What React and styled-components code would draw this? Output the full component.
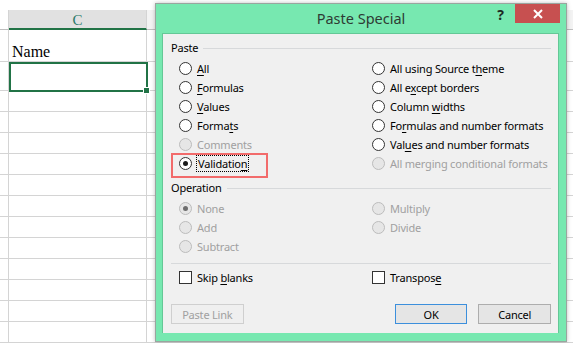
import styled, { createGlobalStyle } from "styled-components";

const Global = createGlobalStyle`
  html, body {
    margin: 0;
    padding: 0;
    background: #ffffff;
  }
`;

const Screen = styled.div`
  position: relative;
  width: 573px;
  height: 343px;
  overflow: hidden;
  background: #ffffff;
  box-shadow: 0 1px 3px rgba(0, 0, 0, 0.45);
`;

/* ---------- spreadsheet behind the dialog ---------- */

const Sheet = styled.div`
  position: relative;
  padding-top: 10px;
  display: grid;
  grid-template-columns: 9px 138px repeat(6, 72px);
  grid-template-rows: 20px 32px 29px repeat(12, 21px);
`;

const HeadCell = styled.div`
  box-sizing: border-box;
  border-right: 1px solid #d4d4d4;
  border-bottom: ${(p) => (p.$active ? "2px solid #217346" : "1px solid #bfbfbf")};
  background: ${(p) => (p.$active ? "#e1e1e1" : p.$corner ? "#ffffff" : "#f3f3f3")};
  color: #2b7a6a;
  font-family: "Liberation Serif", serif;
  font-size: 15px;
  line-height: 20px;
  text-align: center;
`;

const Cell = styled.div`
  box-sizing: border-box;
  border-right: 1px solid #d4d4d4;
  border-bottom: 1px solid #d4d4d4;
  font-family: "Liberation Serif", serif;
  font-size: 16px;
  color: #000;
  padding: 14px 0 0 3px;
  line-height: 16px;
`;

const Selection = styled.div`
  position: absolute;
  left: 9px;
  top: 62px;
  width: 139px;
  height: 30px;
  box-sizing: border-box;
  border: 2px solid #217346;

  &::after {
    content: "";
    position: absolute;
    right: -4px;
    bottom: -4px;
    width: 5px;
    height: 5px;
    background: #217346;
    border: 1px solid #fff;
  }
`;

/* ---------- dialog window ---------- */

const Dialog = styled.div`
  position: absolute;
  left: 155px;
  top: 3px;
  width: 412px;
  height: 339px;
  box-sizing: border-box;
  border: 1px solid #9aa59f;
  background: #77e8b0;
  display: flex;
  flex-direction: column;
  box-shadow: 0 0 4px rgba(0, 0, 0, 0.25);
  font-family: "Noto Sans", "Open Sans", sans-serif;
`;

const TitleBar = styled.div`
  height: 29px;
  display: grid;
  grid-template-columns: 1fr auto 1fr;
  align-items: start;
`;

const Title = styled.div`
  grid-column: 2;
  font-size: 14.5px;
  line-height: 28px;
  color: #2e3b34;
`;

const Controls = styled.div`
  grid-column: 3;
  justify-self: end;
  display: flex;
  align-items: flex-start;
  gap: 11px;
  margin-right: 6px;
`;

const Help = styled.div`
  font-size: 14px;
  font-weight: 700;
  color: #1d2a23;
  line-height: 21px;
`;

const CloseButton = styled.div`
  width: 45px;
  height: 19px;
  background: #c75050;
  display: flex;
  align-items: center;
  justify-content: center;
`;

const Panel = styled.div`
  flex: 1;
  margin: 0 7px 8px 6px;
  background: #f0f0f0;
  border: 1px solid #64c896;
  border-bottom: none;
  padding: 0 7px 0 8px;
  display: flex;
  flex-direction: column;
  font-size: 11px;
  letter-spacing: -0.2px;
  color: #000;
`;

const Legend = styled.div`
  display: flex;
  align-items: center;
  height: 16px;
  margin-top: ${(p) => p.$top}px;

  span {
    line-height: 16px;
  }

  &::after {
    content: "";
    flex: 1;
    height: 1px;
    background: #d7d9db;
    margin-left: 5px;
  }
`;

const Options = styled.div`
  display: grid;
  grid-template-columns: 193px 1fr;
  grid-auto-rows: 19px;
  grid-auto-flow: ${(p) => (p.$column ? "column" : "row")};
  grid-template-rows: ${(p) => (p.$column ? `repeat(${p.$column}, 19px)` : "none")};
  padding-left: 8px;
  margin-top: ${(p) => p.$top}px;
`;

const Option = styled.div`
  position: relative;
  display: flex;
  align-items: center;
  gap: 5px;
  color: ${(p) => (p.$disabled ? "#a0a0a0" : "#000")};
  white-space: nowrap;
`;

const Radio = styled.span`
  width: 13px;
  height: 13px;
  box-sizing: border-box;
  border-radius: 50%;
  border: 1px solid ${(p) => (p.$disabled ? "#bcbcbc" : "#333")};
  background: ${(p) => (p.$disabled ? "#e6e6e6" : "#fff")};
  display: flex;
  align-items: center;
  justify-content: center;
  flex-shrink: 0;

  &::after {
    content: "";
    display: ${(p) => (p.$checked ? "block" : "none")};
    width: 5px;
    height: 5px;
    border-radius: 50%;
    background: ${(p) => (p.$disabled ? "#6d6d6d" : "#1a1a1a")};
  }
`;

const Check = styled.span`
  width: 13px;
  height: 13px;
  box-sizing: border-box;
  border: 1px solid #333;
  background: #fff;
  flex-shrink: 0;
`;

const Focus = styled.span`
  outline: 1px dotted #000;
  outline-offset: 0;
  padding: 0 1px;
  line-height: 15px;
`;

const Highlight = styled.div`
  position: absolute;
  left: -8px;
  top: -1px;
  width: 97px;
  height: 25px;
  box-sizing: border-box;
  border: 2px solid #f26b6b;
  pointer-events: none;
`;

const Separator = styled.div`
  height: 1px;
  background: #d7d9db;
  margin-top: 7px;
`;

const Buttons = styled.div`
  display: flex;
  margin-top: 17px;
  gap: 11px;
`;

const Button = styled.div`
  width: 74px;
  height: 20px;
  box-sizing: border-box;
  display: flex;
  align-items: center;
  justify-content: center;
  border: 1px solid
    ${(p) => (p.$default ? "#3c8fdc" : p.$disabled ? "#cfcfcf" : "#adadad")};
  background: ${(p) => (p.$disabled ? "#efefef" : "#e5e5e5")};
  color: ${(p) => (p.$disabled ? "#a0a0a0" : "#000")};
  margin-left: ${(p) => p.$left || 0}px;
`;

const Key = styled.u`
  text-underline-offset: 2px;
`;

const pasteLeft = [
  { pre: "", key: "A", post: "ll" },
  { pre: "", key: "F", post: "ormulas" },
  { pre: "", key: "V", post: "alues" },
  { pre: "Forma", key: "t", post: "s" },
  { pre: "Comments", disabled: true },
  { pre: "Validatio", key: "n", post: "", checked: true, focus: true },
];

const pasteRight = [
  { pre: "All using Source t", key: "h", post: "eme" },
  { pre: "All e", key: "x", post: "cept borders" },
  { pre: "Column ", key: "w", post: "idths" },
  { pre: "Fo", key: "r", post: "mulas and number formats" },
  { pre: "Val", key: "u", post: "es and number formats" },
  { pre: "All merging conditional formats", disabled: true },
];

const operations = [
  { pre: "None", checked: true },
  { pre: "Add" },
  { pre: "Subtract" },
  { pre: "Multiply" },
  { pre: "Divide" },
];

const Label = ({ item }) => (
  <>
    {item.pre}
    {item.key && <Key>{item.key}</Key>}
    {item.post}
  </>
);

const RadioOption = ({ item, disabled }) => {
  const off = disabled || item.disabled;
  return (
    <Option $disabled={off}>
      {item.focus && <Highlight />}
      <Radio $checked={item.checked} $disabled={off} />
      {item.focus ? (
        <Focus>
          <Label item={item} />
        </Focus>
      ) : (
        <span>
          <Label item={item} />
        </span>
      )}
    </Option>
  );
};

const rowCount = 15;
// only column C's header is visible; the others sit under the dialog
const columns = ["", "C", "", "", "", "", "", ""];

export default function App() {
  return (
    <Screen>
      <Global />
      <Sheet>
        {columns.map((c, i) => (
          <HeadCell key={"h" + i} $active={i === 1} $corner={i === 0}>
            {c}
          </HeadCell>
        ))}
        {Array.from({ length: rowCount - 1 }).map((_, r) =>
          columns.map((c, i) => (
            <Cell key={r + "-" + i}>{r === 0 && i === 1 ? "Name" : ""}</Cell>
          ))
        )}
        <Selection />
      </Sheet>

      <Dialog>
        <TitleBar>
          <Title>Paste Special</Title>
          <Controls>
            <Help>?</Help>
            <CloseButton>
              <svg width="10" height="10" viewBox="0 0 10 10">
                <path d="M1 1 L9 9 M9 1 L1 9" stroke="#fff" strokeWidth="2" />
              </svg>
            </CloseButton>
          </Controls>
        </TitleBar>

        <Panel>
          <Legend $top={6}>
            <span>Paste</span>
          </Legend>
          <Options $top={3} $column={6}>
            {pasteLeft.map((item, i) => (
              <RadioOption key={"l" + i} item={item} />
            ))}
            {pasteRight.map((item, i) => (
              <RadioOption key={"r" + i} item={item} />
            ))}
          </Options>

          <Legend $top={7}>
            <span>Operation</span>
          </Legend>
          <Options $top={3} $column={3}>
            {operations.map((item, i) => (
              <RadioOption key={"o" + i} item={item} disabled />
            ))}
          </Options>

          <Separator />

          <Options $top={4}>
            <Option>
              <Check />
              <span>
                Skip <Key>b</Key>lanks
              </span>
            </Option>
            <Option>
              <Check />
              <span>
                Transpos<Key>e</Key>
              </span>
            </Option>
          </Options>

          <Buttons>
            <Button $disabled>Paste Link</Button>
            <Button $default $left={140}>
              OK
            </Button>
            <Button>Cancel</Button>
          </Buttons>
        </Panel>
      </Dialog>
    </Screen>
  );
}
